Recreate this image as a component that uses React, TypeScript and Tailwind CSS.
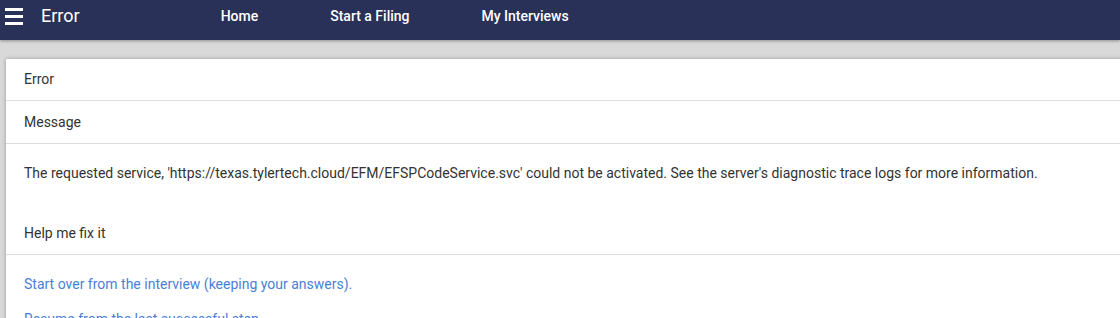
import React from "react";

export default function App() {
  return (
    <div
      className="w-[1120px] h-[318px] overflow-hidden bg-[#d9d9d9] text-[14px] text-[#333]"
      style={{ fontFamily: "Roboto, 'Liberation Sans', sans-serif" }}
    >
      <div className="h-[40px] pb-[8px] bg-[#2a3158] flex items-center shadow-[0_1px_3px_rgba(0,0,0,0.35)] relative z-10">
        <div className="w-[18px] ml-[5px] flex flex-col gap-[4px]">
          <div className="h-[3px] bg-white" />
          <div className="h-[3px] bg-white" />
          <div className="h-[3px] bg-white" />
        </div>
        <div className="ml-[18px] text-[18px] text-white leading-none">Error</div>
        <div className="ml-[141px] flex gap-[72px] text-white text-[14px] font-medium">
          <span>Home</span>
          <span>Start a Filing</span>
          <span>My Interviews</span>
        </div>
      </div>
      <div className="pt-[19px] pl-[6px] -mr-[20px]">
        <div className="bg-white shadow-[0_0_4px_rgba(0,0,0,0.3)] h-[400px]">
          <div className="h-[42px] flex items-center px-[18px] border-b border-[#ddd]">Error</div>
          <div className="h-[43px] flex items-center px-[18px] border-b border-[#ddd]">Message</div>
          <div className="px-[18px] pt-[19px] leading-[20px]">
            The requested service, 'https://texas.tylertech.cloud/EFM/EFSPCodeService.svc' could not be activated. See the server's diagnostic trace logs for more information.
          </div>
          <div className="mt-[30px] h-[42px] flex items-center px-[18px] border-b border-[#ddd]">Help me fix it</div>
          <div className="px-[18px] pt-[19px] leading-[20px] text-[#4a7fd8] flex flex-col gap-[15px]">
            <a>Start over from the interview (keeping your answers).</a>
            <a>Resume from the last successful step.</a>
          </div>
        </div>
      </div>
    </div>
  );
}
